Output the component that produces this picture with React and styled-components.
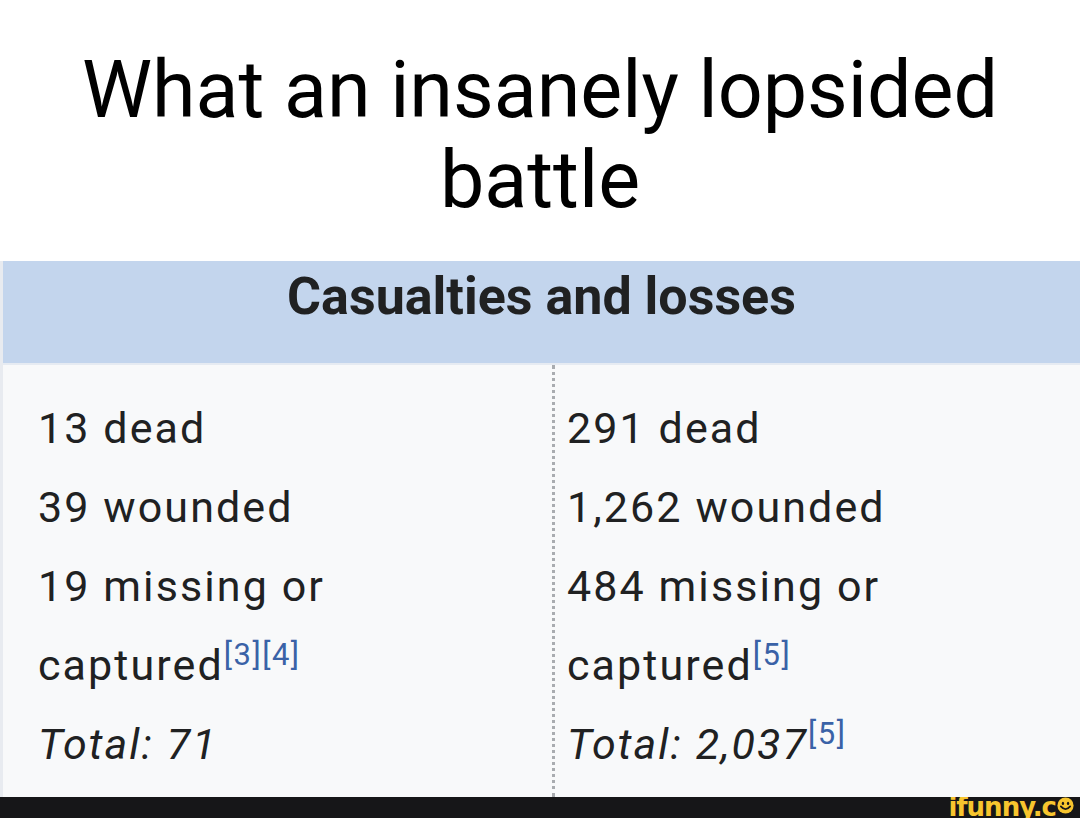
import React from "react";
import styled, { createGlobalStyle } from "styled-components";

const Global = createGlobalStyle`
  html, body { margin: 0; padding: 0; background: #ffffff; }
  body { font-family: Roboto, "Noto Sans", "Liberation Sans", sans-serif; }
`;

const Page = styled.div`
  width: 1080px;
  height: 818px;
  display: flex;
  flex-direction: column;
  background: #ffffff;
  overflow: hidden;
`;

const Title = styled.h1`
  margin: 0;
  padding: 45px 40px 36px;
  font-family: Roboto, sans-serif;
  font-weight: 400;
  font-size: 79px;
  line-height: 90px;
  color: #000000;
  text-align: center;
`;

const Infobox = styled.div`
  flex: 1;
  display: flex;
  flex-direction: column;
  border-left: 3px solid #e8ebf0;
`;

const Header = styled.div`
  height: 104px;
  box-sizing: border-box;
  padding-top: 6px;
  background: #c3d5ed;
  font-family: Roboto, sans-serif;
  font-weight: 700;
  font-size: 52px;
  line-height: 60px;
  color: #202122;
  text-align: center;
  border-bottom: 2px solid #e6ebf2;
`;

const Body = styled.div`
  flex: 1;
  display: grid;
  grid-template-columns: 549px 1fr;
  background: #f8f9fa;
`;

const Cell = styled.div`
  padding: 24px 0 0 ${(p) => (p.$right ? "12px" : "35px")};
  border-left: ${(p) => (p.$right ? "3px dotted #a9acb0" : "none")};
  font-family: Roboto, sans-serif;
  font-size: 43px;
  letter-spacing: 2.1px;
  line-height: 79px;
  color: #202122;
`;

const Line = styled.div`
  white-space: nowrap;
  font-style: ${(p) => (p.$italic ? "italic" : "normal")};
`;

const Ref = styled.sup`
  font-size: 31px;
  letter-spacing: 1.5px;
  line-height: 0;
  color: #3a62a7;
  font-style: normal;
  vertical-align: 0;
  position: relative;
  top: -15px;
  margin-left: 0;
`;

const Footer = styled.div`
  height: 21px;
  background: #161618;
  display: flex;
  justify-content: flex-end;
  align-items: flex-start;
  padding-right: 6px;
`;

const Logo = styled.div`
  display: flex;
  align-items: flex-start;
  font-family: "DejaVu Sans", Roboto, sans-serif;
  font-weight: 700;
  font-size: 26px;
  line-height: 21px;
  letter-spacing: -1px;
  color: #f7c52e;
  height: 21px;
  overflow: hidden;
`;

const Smiley = () => (
  <svg width="17" height="17" viewBox="0 0 20 20" style={{ marginTop: 0, marginLeft: 1 }}>
    <circle cx="10" cy="10" r="9.5" fill="#f7c52e" />
    <ellipse cx="7" cy="7.5" rx="1.4" ry="2" fill="#161618" />
    <ellipse cx="13" cy="7.5" rx="1.4" ry="2" fill="#161618" />
    <path d="M4.5 11 Q10 17.5 15.5 11" stroke="#161618" strokeWidth="2" fill="none" strokeLinecap="round" />
  </svg>
);

export default function App() {
  return (
    <Page>
      <Global />
      <Title>
        What an insanely lopsided
        <br />
        battle
      </Title>
      <Infobox>
        <Header>Casualties and losses</Header>
        <Body>
          <Cell>
            <Line>13 dead</Line>
            <Line>39 wounded</Line>
            <Line>19 missing or</Line>
            <Line>
              captured<Ref>[3][4]</Ref>
            </Line>
            <Line $italic>Total: 71</Line>
          </Cell>
          <Cell $right>
            <Line>291 dead</Line>
            <Line>1,262 wounded</Line>
            <Line>484 missing or</Line>
            <Line>
              captured<Ref>[5]</Ref>
            </Line>
            <Line $italic>
              Total: 2,037<Ref>[5]</Ref>
            </Line>
          </Cell>
        </Body>
      </Infobox>
      <Footer>
        <Logo>
          ifunny.c
          <Smiley />
        </Logo>
      </Footer>
    </Page>
  );
}
